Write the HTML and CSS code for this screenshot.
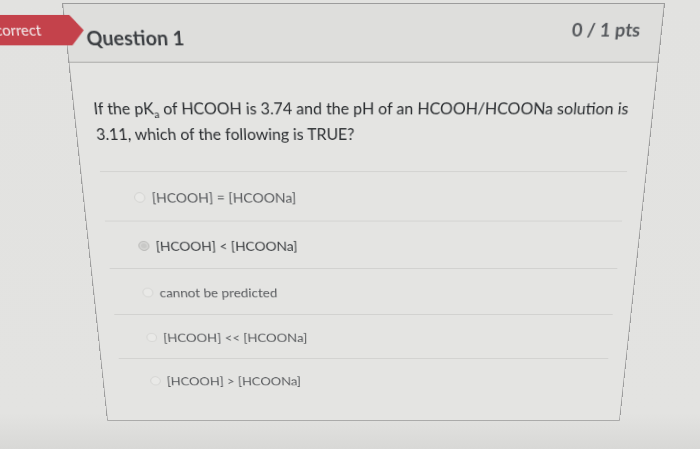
FILE: index.html
```html
<!DOCTYPE html>
<html lang="en">
<head>
<meta charset="utf-8">
<title>Question 1</title>
<link rel="stylesheet" href="styles.css">
</head>
<body>
  <div class="card">
    <div class="flag">Incorrect</div>
    <div class="header">
      <h2 class="title">Question 1</h2>
      <div class="pts">0 / 1 pts</div>
    </div>
    <div class="content">
      <p class="qtext">If the pK<sub>a</sub> of HCOOH is 3.74 and the pH of an HCOOH/HCOONa solution is<br>3.11, which of the following is TRUE?</p>
      <ul class="answers">
        <li class="answer"><span class="radio"></span><span class="label">[HCOOH] = [HCOONa]</span></li>
        <li class="answer selected"><span class="radio"></span><span class="label">[HCOOH] &lt; [HCOONa]</span></li>
        <li class="answer"><span class="radio"></span><span class="label">cannot be predicted</span></li>
        <li class="answer"><span class="radio"></span><span class="label">[HCOOH] &lt;&lt; [HCOONa]</span></li>
        <li class="answer"><span class="radio"></span><span class="label">[HCOOH] &gt; [HCOONa]</span></li>
      </ul>
    </div>
  </div>
</body>
</html>
```
FILE: styles.css
```css
html, body {
  margin: 0;
  padding: 0;
  height: 100%;
  overflow: hidden;
}
body {
  background: linear-gradient(180deg, #e2e2e0 0%, #e3e3e1 92%, #d8d8d6 100%);
  font-family: Lato, "Open Sans", sans-serif;
  padding: 3px 0 0 62px;
  box-sizing: border-box;
}
.card {
  position: relative;
  width: 603px;
  box-sizing: border-box;
  border: 1px solid #9c9c9c;
  background: #e4e4e2;
  box-shadow: 0 2px 0 -1px #c4c4c2;
  transform-origin: 50% 0;
  transform: matrix3d(1,0,0,0, 0,1,0,0.000358, 0,0,1,0, 0,0,0,1);
}
.flag {
  position: absolute;
  left: -101px;
  top: 11px;
  width: 119px;
  height: 31px;
  box-sizing: border-box;
  padding-right: 43px;
  background: #c4424b;
  color: #f4f0f0;
  font-size: 15px;
  line-height: 31px;
  text-align: right;
  clip-path: polygon(0 0, 106px 0, 119px 50%, 106px 100%, 0 100%);
}
.header {
  display: flex;
  justify-content: space-between;
  align-items: flex-start;
  height: 59px;
  padding: 0 21px 0 20px;
  border-bottom: 1px solid #a8a8a6;
  background: #dededc;
}
.title {
  margin: 20px 0 0;
  font-size: 20px;
  line-height: 28px;
  font-weight: 700;
  color: #3c3f43;
}
.pts {
  margin-top: 12px;
  font-size: 18.5px;
  line-height: 28px;
  font-weight: 700;
  color: #56595d;
}
.content {
  padding: 35px 20px 26px;
}
.qtext {
  margin: 0 0 27px;
  font-size: 16.6px;
  line-height: 28px;
  color: #2a2d30;
  white-space: nowrap;
}
.qtext sub {
  font-size: 11px;
  line-height: 0;
}
.answers {
  list-style: none;
  margin: 0;
  padding: 0;
}
.answer {
  display: flex;
  align-items: center;
  height: 18px;
  padding: 20px 0 18px 34px;
  border-top: 1px solid #d0d0ce;
}
.radio {
  width: 12px;
  height: 12px;
  box-sizing: border-box;
  border: 1px solid #d2d2d0;
  border-radius: 50%;
  background: #e9e9e7;
  margin-right: 7px;
  flex: none;
}
.selected .radio {
  border-color: #b9b9b7;
  background: #c9c9c7;
  box-shadow: inset 0 0 0 2px #d6d6d4;
}
.label {
  font-size: 15px;
  line-height: 18px;
  color: #5a5c5f;
}
.selected .label {
  color: #3c3f42;
}
```
